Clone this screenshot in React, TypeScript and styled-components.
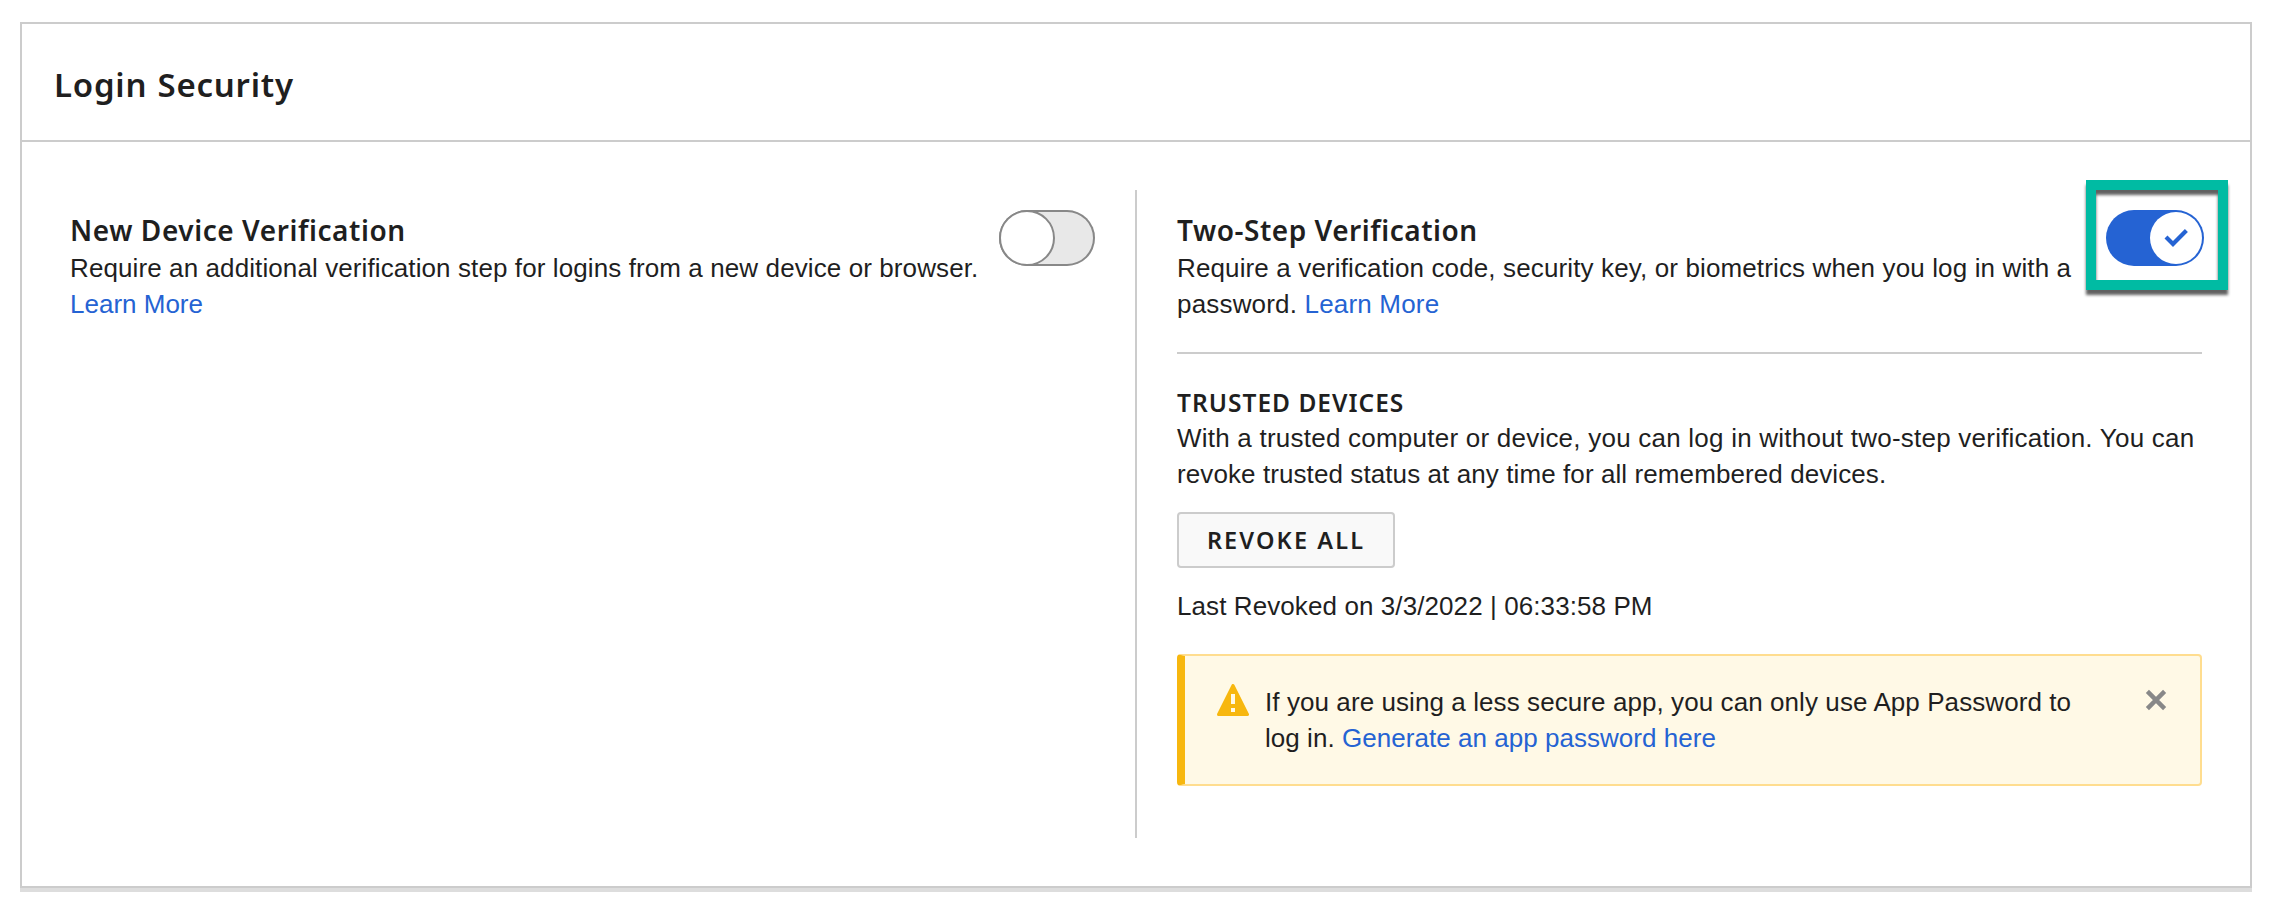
import React from "react";
import styled, { createGlobalStyle, css } from "styled-components";

const color = {
  text: "#1f1f1f",
  link: "#2563d3",
  rule: "#cccccc",
  grey: "#888888",
  amber: "#f7b70f",
  teal: "#00bba3",
};

const GlobalStyle = createGlobalStyle`
  *, *::before, *::after { box-sizing: border-box; }
  body {
    margin: 0;
    background: #fff;
    color: ${color.text};
    font: 26px/36px "Liberation Sans", Arial, sans-serif;
  }
  h1, h2, h3, p { margin: 0; }
`;

const headingFont = css`
  font-family: "Noto Sans", sans-serif;
  font-weight: 600;
  white-space: nowrap;
`;

const Page = styled.main`
  padding: 22px 24px 18px 20px;
`;

const Card = styled.section`
  border: 2px solid ${color.rule};
  box-shadow: 0 4px 0 #dddddd;
  background: #fff;
`;

const CardHeader = styled.header`
  height: 118px;
  padding: 43px 32px 0;
  border-bottom: 2px solid ${color.rule};
`;

const Title = styled.h1`
  ${headingFont}
  font-size: 33px;
  line-height: 36px;
  letter-spacing: 0.75px;
  word-spacing: 1px;
`;

const Columns = styled.div`
  display: flex;
  padding: 48px 0;
`;

const Column = styled.div<{ $side: "left" | "right" }>`
  flex: 1 1 0;
  min-width: 0;
  padding: ${(p) => (p.$side === "left" ? "20px 40px 52px 48px" : "20px 48px 52px 40px")};
`;

const Divider = styled.div`
  flex: none;
  width: 2px;
  background: ${color.rule};
`;

const Setting = styled.div`
  display: flex;
  justify-content: space-between;
  align-items: flex-start;
`;

const SettingTitle = styled.h2<{ $spacing: number }>`
  ${headingFont}
  height: 40px;
  font-size: 28px;
  line-height: 41px;
  letter-spacing: ${(p) => p.$spacing}px;
`;

const Line = styled.span<{ $spacing?: number }>`
  display: block;
  white-space: nowrap;
  letter-spacing: ${(p) => p.$spacing ?? 0}px;
`;

const Link = styled.a`
  color: ${color.link};
  text-decoration: none;
  cursor: pointer;
`;

const ToggleWrap = styled.div`
  position: relative;
  flex: none;
  width: 96px;
  height: 56px;
`;

const ToggleTrack = styled.button<{ $on: boolean }>`
  display: flex;
  align-items: center;
  justify-content: ${(p) => (p.$on ? "flex-end" : "flex-start")};
  width: ${(p) => (p.$on ? 98 : 96)}px;
  height: 56px;
  padding: ${(p) => (p.$on ? "0 2px 0 0" : "0")};
  border: 0;
  border-radius: 28px;
  background: ${(p) => (p.$on ? color.link : "#e8e8e8")};
  box-shadow: ${(p) => (p.$on ? "none" : `inset 0 0 0 2px ${color.grey}`)};
  cursor: pointer;
`;

const Knob = styled.span<{ $on: boolean }>`
  display: flex;
  align-items: center;
  justify-content: center;
  width: ${(p) => (p.$on ? 52 : 56)}px;
  height: ${(p) => (p.$on ? 52 : 56)}px;
  border: ${(p) => (p.$on ? "0" : `2px solid ${color.grey}`)};
  border-radius: 50%;
  background: #fff;
`;

const Highlight = styled.div`
  position: absolute;
  top: -30px;
  left: -20px;
  width: 142px;
  height: 110px;
  border: 10px solid ${color.teal};
  filter: drop-shadow(0 5px 1.5px rgba(0, 0, 0, 0.62));
  pointer-events: none;
`;

const Devices = styled.div`
  margin-top: 30px;
  padding-top: 30px;
  border-top: 2px solid ${color.rule};
`;

const DevicesTitle = styled.h3`
  ${headingFont}
  height: 36px;
  font-size: 24.5px;
  line-height: 38px;
  letter-spacing: 1px;
`;

const RevokeButton = styled.button`
  ${headingFont}
  display: block;
  width: 218px;
  height: 56px;
  margin: 20px 0;
  padding: 0;
  border: 2px solid ${color.rule};
  border-radius: 4px;
  background: #f9f9f9;
  color: ${color.text};
  font-size: 23.5px;
  line-height: 52px;
  letter-spacing: 2.1px;
`;

const Alert = styled.div`
  display: flex;
  align-items: flex-start;
  height: 132px;
  margin-top: 30px;
  padding: 28px 33px 28px 32px;
  border: 2px solid #ffdd8f;
  border-left: 8px solid ${color.amber};
  border-radius: 4px;
  background: #fff9e6;
`;

const AlertText = styled.p`
  flex: 1;
  margin-left: 16px;
`;

const CloseButton = styled.button`
  display: flex;
  margin-top: 5px;
  padding: 0;
  border: 0;
  background: none;
  cursor: pointer;
`;

function Toggle({ on, label, highlighted }: { on: boolean; label: string; highlighted?: boolean }) {
  return (
    <ToggleWrap>
      <ToggleTrack $on={on} role="switch" aria-checked={on} aria-label={label}>
        <Knob $on={on}>
          {on && (
            <svg width="24" height="20" viewBox="0 0 24 20" fill="none">
              <path d="M2 9 9 16 22.4 2.6" stroke={color.link} strokeWidth="4.2" />
            </svg>
          )}
        </Knob>
      </ToggleTrack>
      {highlighted && <Highlight />}
    </ToggleWrap>
  );
}

function WarningIcon() {
  return (
    <svg width="32" height="32" viewBox="0 0 32 32">
      <path
        d="M16 1.5 30.5 30.5H1.5Z"
        fill={color.amber}
        stroke={color.amber}
        strokeWidth="3"
        strokeLinejoin="round"
      />
      <path d="M14 10h4v10h-4zM14 24h4v4h-4z" fill="#fff9e6" />
    </svg>
  );
}

export default function App() {
  return (
    <>
      <GlobalStyle />
      <Page>
        <Card>
          <CardHeader>
            <Title>Login Security</Title>
          </CardHeader>
          <Columns>
            <Column $side="left">
              <Setting>
                <div>
                  <SettingTitle $spacing={0.57}>New Device Verification</SettingTitle>
                  <p>
                    <Line $spacing={0.1}>
                      Require an additional verification step for logins from a new device or browser.
                    </Line>
                    <Line>
                      <Link>Learn More</Link>
                    </Line>
                  </p>
                </div>
                <Toggle on={false} label="New Device Verification" />
              </Setting>
            </Column>
            <Divider />
            <Column $side="right">
              <Setting>
                <div>
                  <SettingTitle $spacing={0.53}>Two-Step Verification</SettingTitle>
                  <p>
                    <Line $spacing={0.13}>
                      Require a verification code, security key, or biometrics when you log in with a
                    </Line>
                    <Line $spacing={0.18}>
                      password. <Link>Learn More</Link>
                    </Line>
                  </p>
                </div>
                <Toggle on label="Two-Step Verification" highlighted />
              </Setting>
              <Devices>
                <DevicesTitle>TRUSTED DEVICES</DevicesTitle>
                <p>
                  <Line $spacing={0.23}>
                    With a trusted computer or device, you can log in without two-step verification. You can
                  </Line>
                  <Line $spacing={0.09}>revoke trusted status at any time for all remembered devices.</Line>
                </p>
                <RevokeButton>REVOKE ALL</RevokeButton>
                <Line $spacing={0.09}>Last Revoked on 3/3/2022 | 06:33:58 PM</Line>
                <Alert>
                  <WarningIcon />
                  <AlertText>
                    <Line $spacing={0.08}>If you are using a less secure app, you can only use App Password to</Line>
                    <Line $spacing={0.04}>
                      log in. <Link>Generate an app password here</Link>
                    </Line>
                  </AlertText>
                  <CloseButton aria-label="Dismiss">
                    <svg width="22" height="22" viewBox="0 0 22 22">
                      <path d="M2.4 2.4 19.6 19.6M19.6 2.4 2.4 19.6" stroke={color.grey} strokeWidth="4.4" />
                    </svg>
                  </CloseButton>
                </Alert>
              </Devices>
            </Column>
          </Columns>
        </Card>
      </Page>
    </>
  );
}
